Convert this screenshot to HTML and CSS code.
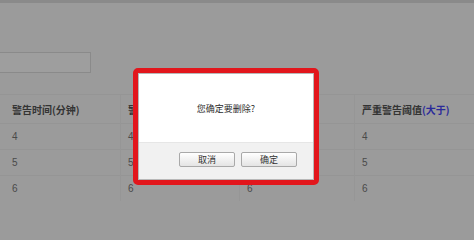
FILE: index.html
```html
<!DOCTYPE html>
<html lang="zh">
<head>
<meta charset="utf-8">
<link rel="stylesheet" href="styles.css">
</head>
<body>
<div class="page">
  <div class="topband"></div>
  <div class="toolbar">
    <div class="search"></div>
  </div>
  <table class="grid">
    <thead>
      <tr>
        <th class="c1">警告时间(分钟)</th>
        <th class="c2">警告</th>
        <th class="c3"></th>
        <th class="c4">严重警告阈值<span class="blue">(大于)</span></th>
      </tr>
    </thead>
    <tbody>
      <tr><td class="c1">4</td><td class="c2">4</td><td class="c3">4</td><td class="c4">4</td></tr>
      <tr><td class="c1">5</td><td class="c2">5</td><td class="c3">5</td><td class="c4">5</td></tr>
      <tr><td class="c1">6</td><td class="c2">6</td><td class="c3">6</td><td class="c4">6</td></tr>
    </tbody>
  </table>
  <div class="highlight">
    <div class="dialog">
      <div class="dialog-body">您确定要删除?</div>
      <div class="dialog-foot">
        <button class="btn">取消</button>
        <button class="btn">确定</button>
      </div>
    </div>
  </div>
</div>
</body>
</html>
```
FILE: styles.css
```css
html, body {
  margin: 0;
  padding: 0;
}
body {
  width: 474px;
  height: 204px;
  overflow: hidden;
  background: #9b9b9b;
  font-family: "Liberation Sans", "Noto Sans CJK SC", sans-serif;
}
.page {
  position: relative;
  width: 474px;
  height: 204px;
  overflow: hidden;
}
.topband {
  height: 3px;
  background: #8a8a8a;
}
.toolbar {
  height: 91px;
  box-sizing: border-box;
  padding-top: 49px;
}
.search {
  margin-left: -10px;
  width: 99px;
  height: 19px;
  border: 1px solid #8a8a8a;
  background: #9e9e9e;
}
.grid {
  border-collapse: collapse;
  table-layout: fixed;
  width: 474px;
}
.grid th, .grid td {
  text-align: left;
  font-size: 10px;
  padding: 0 0 0 7px;
  border-top: 1px solid #959595;
  white-space: nowrap;
  overflow: hidden;
}
.grid th {
  height: 28px;
  font-weight: bold;
  color: #333;
  font-family: "Noto Sans CJK SC", sans-serif;
}
.grid td {
  height: 25px;
  color: #4a4a4a;
}
.grid .c1 { width: 108px; padding-left: 12px; }
.grid .c2 { width: 111px; border-left: 1px solid #969696; }
.grid .c3 { width: 107px; border-left: 1px solid #969696; }
.grid .c4 { border-left: 1px solid #969696; }
.blue { color: #2a2a9a; }
.highlight {
  position: absolute;
  left: 133px;
  top: 68px;
  width: 176px;
  height: 107px;
  border: 5px solid #e2161c;
  border-radius: 5px;
  background: #b8b8b8;
}
.dialog {
  margin: 1px 0 0 1px;
  width: 174px;
  height: 105px;
  background: #fff;
  display: flex;
  flex-direction: column;
}
.dialog-body {
  height: 68px;
  display: flex;
  align-items: center;
  justify-content: center;
  font-family: "Noto Sans CJK SC", sans-serif;
  font-size: 9px;
  color: #2a2a2a;
  padding-top: 1px;
  box-sizing: border-box;
}
.dialog-foot {
  flex: 1;
  background: #f1f1f1;
  border-top: 1px solid #e6e6e6;
  display: flex;
  justify-content: flex-end;
  align-items: flex-start;
  gap: 6px;
  padding: 9px 16px 0 0;
}
.btn {
  width: 56px;
  height: 15px;
  padding: 0;
  border: 1px solid #a9a9a9;
  border-radius: 2px;
  background: linear-gradient(#ffffff, #e4e4e4);
  font-family: "Noto Sans CJK SC", sans-serif;
  font-size: 9px;
  line-height: 13px;
  color: #333;
}
```
